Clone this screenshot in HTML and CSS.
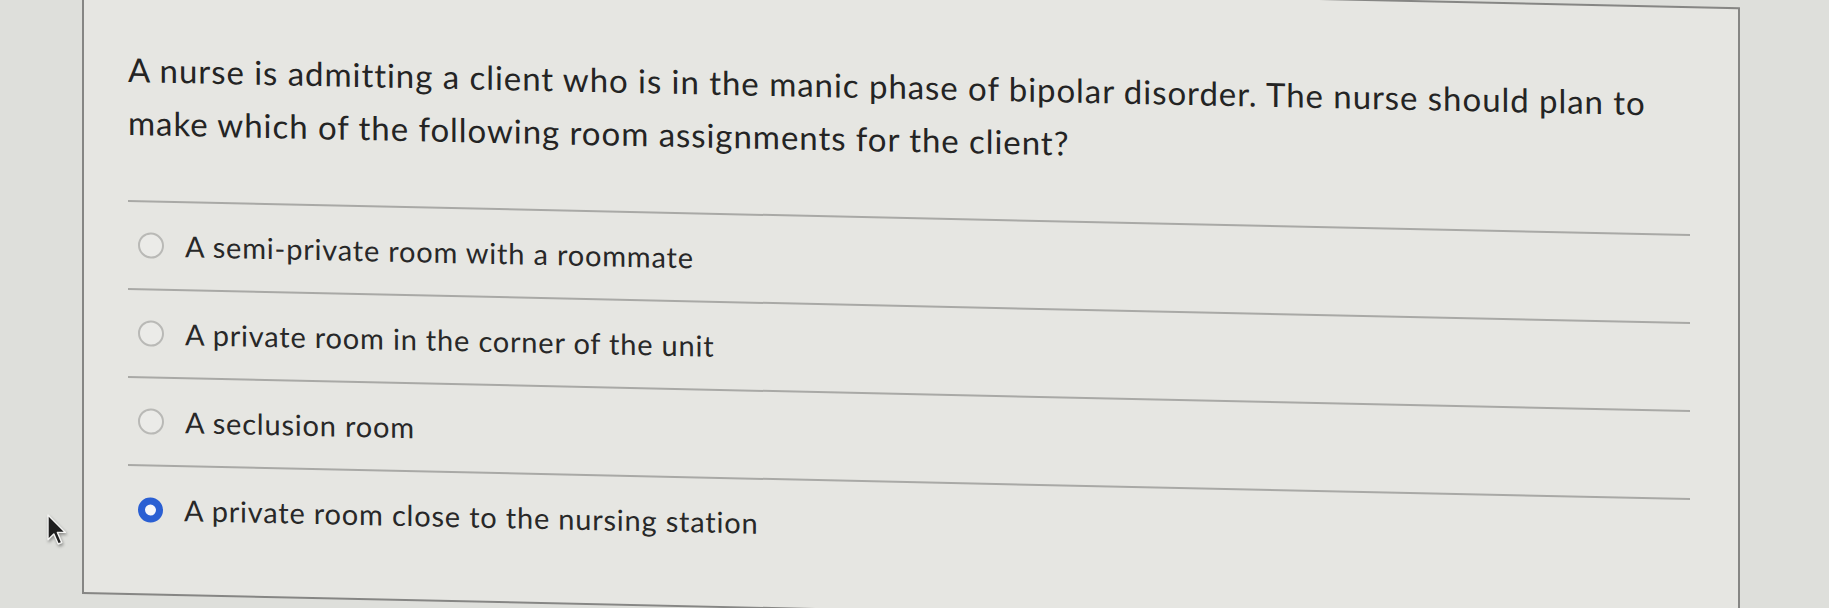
FILE: index.html
```html
<!DOCTYPE html>
<html lang="en">
<head>
<meta charset="utf-8">
<title>Question</title>
<link rel="stylesheet" href="styles.css">
</head>
<body>
<main class="page">
  <section class="card">
    <p class="question">A nurse is admitting a client who is in the manic phase of bipolar disorder. The nurse should plan to make which of the following room assignments for the client?</p>
    <ul class="options">
      <li class="option"><span class="radio"></span><span class="label">A semi-private room with a roommate</span></li>
      <li class="option"><span class="radio"></span><span class="label">A private room in the corner of the unit</span></li>
      <li class="option"><span class="radio"></span><span class="label">A seclusion room</span></li>
      <li class="option"><span class="radio radio--checked"></span><span class="label">A private room close to the nursing station</span></li>
    </ul>
  </section>
  <svg class="cursor" viewBox="0 0 26 38" width="26" height="38" aria-hidden="true">
    <path d="M4 4 L4 28.7 L9.8 22.9 L14.2 33 L17.8 31.6 L13.4 21.4 L21.4 21.4 Z" fill="#1e1e1e" stroke="#f4f4f2" stroke-width="1.4" stroke-linejoin="round"/>
  </svg>
</main>
</body>
</html>
```

FILE: styles.css
```css
html, body {
  margin: 0;
  padding: 0;
  height: 100%;
  overflow: hidden;
}

body {
  background: #dedfdb;
  font-family: Lato, "Open Sans", "Liberation Sans", sans-serif;
  color: #2a2a2a;
}

.page {
  position: relative;
  width: 1829px;
  height: 608px;
  overflow: hidden;
  box-sizing: border-box;
  padding-left: 82px;
}

.card {
  width: 1658px;
  box-sizing: border-box;
  margin-top: -29px;
  border: 2px solid #868684;
  background: #e6e6e2;
  padding: 69px 48px 41px 44px;
  transform: skewY(1.25deg);
  transform-origin: 0 0;
}

.question {
  margin: 0 0 51px 0;
  font-size: 33px;
  letter-spacing: 0.95px;
  line-height: 53px;
  color: #242424;
}

.options {
  list-style: none;
  margin: 0;
  padding: 0;
}

.option {
  display: flex;
  align-items: center;
  height: 88px;
  box-sizing: border-box;
  border-top: 2px solid #a9a9a6;
}

.radio {
  flex: none;
  width: 26px;
  height: 26px;
  box-sizing: border-box;
  margin-left: 10px;
  border: 2px solid #b9b9b6;
  border-radius: 50%;
  background: #ebebe8;
}

.radio--checked {
  width: 25px;
  height: 25px;
  border: 7.5px solid #2a5fd3;
  background: #f6f7fb;
}

.label {
  margin-left: 21px;
  font-size: 29px;
  letter-spacing: 0.8px;
  line-height: 32px;
  color: #282828;
}

.cursor {
  position: absolute;
  left: 44px;
  top: 511px;
  filter: drop-shadow(1px 2px 1.5px rgba(0, 0, 0, 0.35));
}
```
